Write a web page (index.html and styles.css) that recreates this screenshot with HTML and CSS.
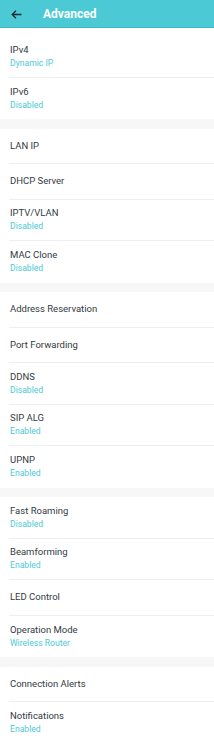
FILE: index.html
```html
<!DOCTYPE html>
<html lang="en">
<head>
    <meta charset="UTF-8">
    <meta name="viewport" content="width=device-width, initial-scale=1.0">
    <title>Advanced</title>
    <link rel="stylesheet" href="styles.css">
</head>
<body>
    <header class="app-bar">
        <svg class="back" viewBox="0 0 11 9" width="11" height="9">
            <path d="M10.5 4.5H1M5 0.8L1.2 4.5 5 8.2" fill="none" stroke="#1e2b33" stroke-width="1.3"/>
        </svg>
        <h1>Advanced</h1>
    </header>
    <main>
        <section class="group first">
            <div class="item two"><span class="label">IPv4</span><span class="value">Dynamic IP</span></div>
            <div class="item two"><span class="label">IPv6</span><span class="value">Disabled</span></div>
        </section>

        <section class="group">
            <div class="item"><span class="label">LAN IP</span></div>
            <div class="item"><span class="label">DHCP Server</span></div>
            <div class="item two"><span class="label">IPTV/VLAN</span><span class="value">Disabled</span></div>
            <div class="item two"><span class="label">MAC Clone</span><span class="value">Disabled</span></div>
        </section>

        <section class="group">
            <div class="item"><span class="label">Address Reservation</span></div>
            <div class="item"><span class="label">Port Forwarding</span></div>
            <div class="item two"><span class="label">DDNS</span><span class="value">Disabled</span></div>
            <div class="item two"><span class="label">SIP ALG</span><span class="value">Enabled</span></div>
            <div class="item two"><span class="label">UPNP</span><span class="value">Enabled</span></div>
        </section>

        <section class="group">
            <div class="item two"><span class="label">Fast Roaming</span><span class="value">Disabled</span></div>
            <div class="item two"><span class="label">Beamforming</span><span class="value">Enabled</span></div>
            <div class="item"><span class="label">LED Control</span></div>
            <div class="item two"><span class="label">Operation Mode</span><span class="value">Wireless Router</span></div>
        </section>

        <section class="group">
            <div class="item"><span class="label">Connection Alerts</span></div>
            <div class="item two"><span class="label">Notifications</span><span class="value">Enabled</span></div>
        </section>
    </main>
</body>
</html>
```

FILE: styles.css
```css
body {
    font-family: 'Roboto', 'Liberation Sans', sans-serif;
    margin: 0;
    padding: 0;
    background-color: #f7f7f7;
    width: 214px;
    height: 744px;
    overflow: hidden;
}

.app-bar {
    height: 27px;
    background-color: #4bc9d4;
    border-bottom: 1px solid #3fb9c5;
    display: flex;
    align-items: center;
    padding-left: 11px;
    box-shadow: 0 1px 2px rgba(0, 0, 0, 0.12);
}

.app-bar h1 {
    margin: 0 0 0 21px;
    color: white;
    font-size: 12px;
    font-weight: 700;
}

.back {
    display: block;
    margin-top: 2px;
}

main {
    display: flex;
    flex-direction: column;
    gap: 9.5px;
}

.group {
    background-color: white;
}

.group.first {
    padding-top: 8px;
}

.item {
    height: 35.5px;
    margin-left: 9px;
    padding-left: 1px;
    border-bottom: 1px solid #efefef;
    box-sizing: border-box;
    display: flex;
    flex-direction: column;
    justify-content: center;
}

.item.two {
    height: 41.5px;
}

.item:last-child {
    border-bottom: none;
}

.label {
    font-size: 9.5px;
    color: #333a3f;
    line-height: 12px;
}

.value {
    font-size: 8.6px;
    color: #4cc9d4;
    line-height: 12px;
    margin-top: 1px;
}
```
